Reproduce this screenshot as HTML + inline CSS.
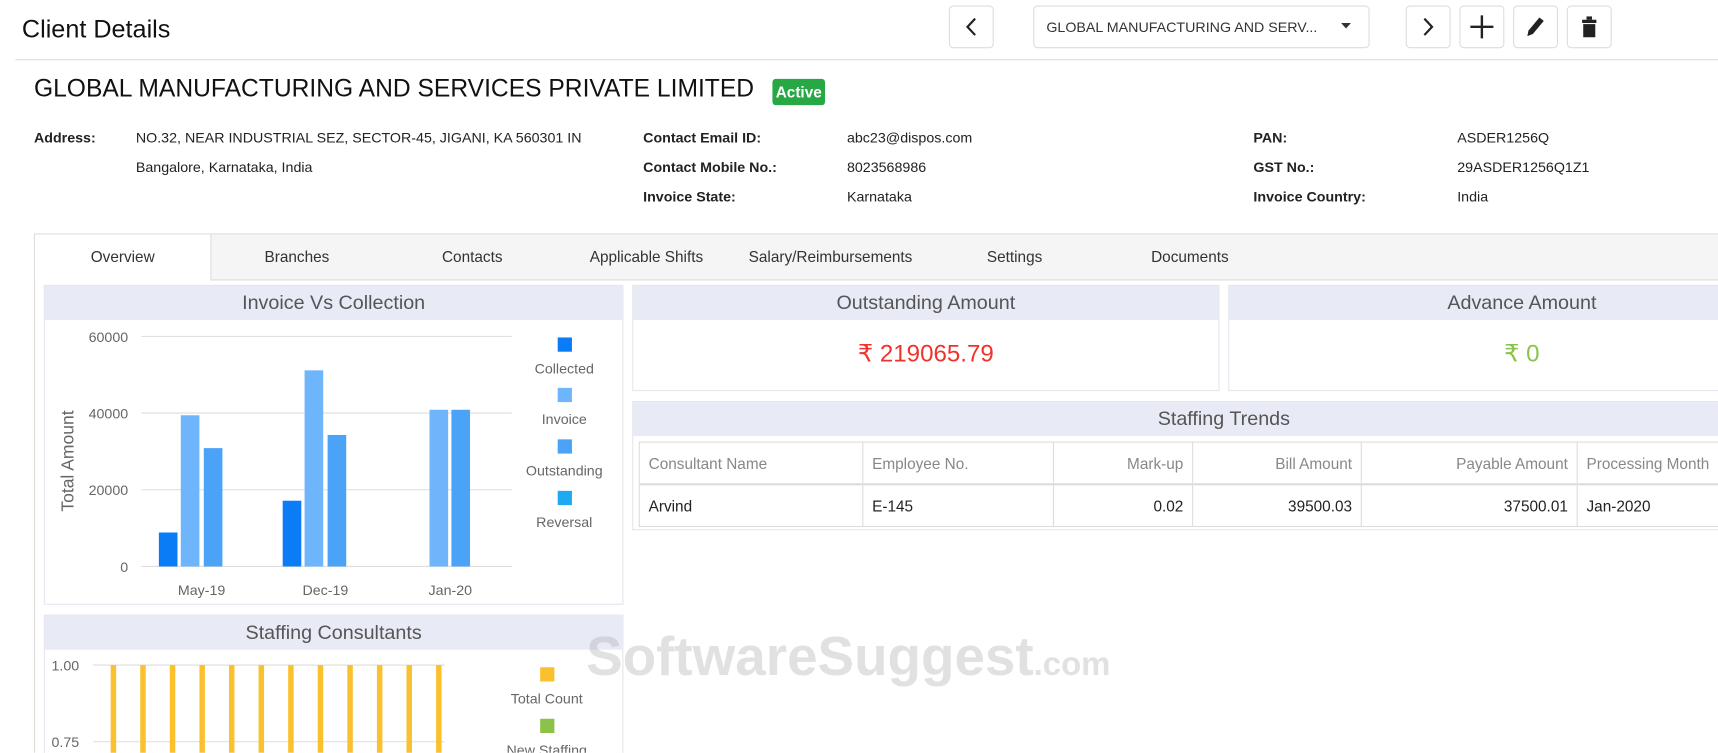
<!DOCTYPE html>
<html><head><meta charset="utf-8"><style>
html,body{margin:0;padding:0;background:#fff;overflow:hidden;width:1718px;height:753px}
#w{position:absolute;left:0;top:0;width:1568px;height:687px;overflow:hidden;transform:scale(1.09566);transform-origin:0 0;font-family:"Liberation Sans",sans-serif;color:#222}
.a{position:absolute;white-space:nowrap}
.btn{position:absolute;top:5px;height:39px;border:1px solid #ddd;border-radius:4px;background:#fff;box-sizing:border-box}
.lbl{font-weight:bold;font-size:13px;color:#222}
.val{font-size:13px;color:#222}
.panel{position:absolute;border:1px solid #e3e6ee;box-sizing:border-box;background:#fff}
.ph{position:absolute;left:0;right:0;top:0;height:31px;background:#e8eaf6;color:#555;font-size:18px;text-align:center;line-height:31px}
.tab{position:absolute;top:226px;font-size:14px;color:#333;transform:translateX(-50%)}
table{border-collapse:collapse;font-size:14px;table-layout:fixed;width:986px}
td{border:1px solid #ddd;padding:0 8px;height:37px;color:#888;overflow:hidden;white-space:nowrap}
</style></head><body><div id="w">
<div class="a" style="left:20px;top:13px;font-size:23px;color:#111">Client Details</div>
<div class="a" style="left:14px;top:54px;width:1554px;height:1px;background:#ddd"></div>
<div class="btn" style="left:866px;width:41px"><svg width="39" height="37"><path d="M23 11 L16 18.5 L23 26" stroke="#222" stroke-width="2" fill="none"/></svg></div>
<div class="btn" style="left:943px;width:307px"><span class="a" style="left:11px;top:11px;font-size:13px;color:#333">GLOBAL MANUFACTURING AND SERV...</span><svg class="a" style="left:280px;top:14px" width="10" height="8"><path d="M0 1h9l-4.5 5z" fill="#333"/></svg></div>
<div class="btn" style="left:1283px;width:41px"><svg width="39" height="37"><path d="M16 11 L23 18.5 L16 26" stroke="#222" stroke-width="2" fill="none"/></svg></div>
<div class="btn" style="left:1332px;width:41px"><svg width="39" height="37"><path d="M19.5 8v21M9 18.5h21" stroke="#222" stroke-width="2.2"/></svg></div>
<div class="btn" style="left:1381px;width:41px"><svg width="39" height="37"><path d="M12 27 L13 22 L23 10 L27 13 L17 25 Z" fill="#222"/></svg></div>
<div class="btn" style="left:1430px;width:41px"><svg width="39" height="37"><rect x="13" y="12" width="13" height="3" fill="#222"/><rect x="17" y="9" width="5" height="3" fill="#222"/><rect x="14" y="16" width="11" height="12" fill="#222"/></svg></div>

<div class="a" style="left:31px;top:67px;font-size:23px;color:#111;transform:scaleX(0.977);transform-origin:0 0">GLOBAL MANUFACTURING AND SERVICES PRIVATE LIMITED</div>
<div class="a" style="left:705px;top:72px;width:48px;height:24px;background:#28a745;border-radius:3px;color:#fff;font-size:14px;font-weight:bold;text-align:center;line-height:24px">Active</div>

<div class="a lbl" style="left:31px;top:118px">Address:</div>
<div class="a val" style="left:124px;top:118px">NO.32, NEAR INDUSTRIAL SEZ, SECTOR-45, JIGANI, KA 560301 IN</div>
<div class="a val" style="left:124px;top:145px">Bangalore, Karnataka, India</div>
<div class="a lbl" style="left:587px;top:118px">Contact Email ID:</div>
<div class="a val" style="left:773px;top:118px">abc23@dispos.com</div>
<div class="a lbl" style="left:587px;top:145px">Contact Mobile No.:</div>
<div class="a val" style="left:773px;top:145px">8023568986</div>
<div class="a lbl" style="left:587px;top:172px">Invoice State:</div>
<div class="a val" style="left:773px;top:172px">Karnataka</div>
<div class="a lbl" style="left:1144px;top:118px">PAN:</div>
<div class="a val" style="left:1330px;top:118px">ASDER1256Q</div>
<div class="a lbl" style="left:1144px;top:145px">GST No.:</div>
<div class="a val" style="left:1330px;top:145px">29ASDER1256Q1Z1</div>
<div class="a lbl" style="left:1144px;top:172px">Invoice Country:</div>
<div class="a val" style="left:1330px;top:172px">India</div>

<div class="a" style="left:31px;top:213px;width:1537px;height:500px;border:1px solid #ddd;border-right:none;box-sizing:border-box"></div>
<div class="a" style="left:32px;top:214px;width:1536px;height:41px;background:#f5f5f5;border-bottom:1px solid #ddd"></div>
<div class="a" style="left:32px;top:214px;width:160px;height:42px;background:#fff;border-right:1px solid #ddd"></div>
<div class="tab" style="left:112px">Overview</div>
<div class="tab" style="left:271px">Branches</div>
<div class="tab" style="left:431px">Contacts</div>
<div class="tab" style="left:590px">Applicable Shifts</div>
<div class="tab" style="left:758px">Salary/Reimbursements</div>
<div class="tab" style="left:926px">Settings</div>
<div class="tab" style="left:1086px">Documents</div>

<div class="panel" style="left:40px;top:260px;width:529px;height:292px"><div class="ph">Invoice Vs Collection</div>
<svg class="a" style="left:0;top:31px" width="527" height="260" font-family="Liberation Sans" font-size="13" fill="#666">
<g stroke="#ddd"><line x1="88" x2="426" y1="15" y2="15"/><line x1="88" x2="426" y1="85" y2="85"/><line x1="88" x2="426" y1="155" y2="155"/><line x1="88" x2="426" y1="225" y2="225"/></g>
<g text-anchor="end"><text x="76" y="20">60000</text><text x="76" y="90">40000</text><text x="76" y="160">20000</text><text x="76" y="230">0</text></g>
<text transform="translate(26 175) rotate(-90)" font-size="16" fill="#666">Total Amount</text>
<rect x="104" y="194" width="17" height="31" fill="#0a7cf5"/><rect x="124" y="87" width="17" height="138" fill="#6fb5fb"/><rect x="145" y="117" width="17" height="108" fill="#4aa3f6"/>
<rect x="217" y="165" width="17" height="60" fill="#0a7cf5"/><rect x="237" y="46" width="17" height="179" fill="#6fb5fb"/><rect x="258" y="105" width="17" height="120" fill="#4aa3f6"/>
<rect x="351" y="82" width="17" height="143" fill="#6fb5fb"/><rect x="371" y="82" width="17" height="143" fill="#4aa3f6"/>
<g text-anchor="middle"><text x="143" y="251">May-19</text><text x="256" y="251">Dec-19</text><text x="370" y="251">Jan-20</text>
<rect x="468" y="16" width="13" height="13" fill="#0a7cf5"/><text x="474" y="49">Collected</text>
<rect x="468" y="62" width="13" height="13" fill="#6fb5fb"/><text x="474" y="95">Invoice</text>
<rect x="468" y="109" width="13" height="13" fill="#4aa3f6"/><text x="474" y="142">Outstanding</text>
<rect x="468" y="156" width="13" height="13" fill="#1eaaf1"/><text x="474" y="189">Reversal</text></g>
</svg></div>

<div class="panel" style="left:577px;top:260px;width:536px;height:97px"><div class="ph">Outstanding Amount</div>
<div class="a" style="left:0;right:0;top:49px;text-align:center;font-size:22px;color:#f0322c">₹ 219065.79</div></div>
<div class="panel" style="left:1121px;top:260px;width:536px;height:97px"><div class="ph">Advance Amount</div>
<div class="a" style="left:0;right:0;top:49px;text-align:center;font-size:22px;color:#8bc34a">₹ 0</div></div>

<div class="panel" style="left:577px;top:366px;width:1080px;height:118px"><div class="ph">Staffing Trends</div>
<table class="a" style="left:5px;top:36px">
<colgroup><col style="width:204px"><col style="width:174px"><col style="width:127px"><col style="width:154px"><col style="width:197px"><col style="width:130px"></colgroup>
<tr><td>Consultant Name</td><td>Employee No.</td><td style="text-align:right">Mark-up</td><td style="text-align:right">Bill Amount</td><td style="text-align:right">Payable Amount</td><td>Processing Month</td></tr>
<tr><td style="color:#222;border-top:2px solid #ddd">Arvind</td><td style="color:#222;border-top:2px solid #ddd">E-145</td><td style="color:#222;text-align:right;border-top:2px solid #ddd">0.02</td><td style="color:#222;text-align:right;border-top:2px solid #ddd">39500.03</td><td style="color:#222;text-align:right;border-top:2px solid #ddd">37500.01</td><td style="color:#222;border-top:2px solid #ddd">Jan-2020</td></tr>
</table></div>

<div class="panel" style="left:40px;top:561px;width:529px;height:160px"><div class="ph">Staffing Consultants</div>
<svg class="a" style="left:0;top:31px" width="527" height="120" font-family="Liberation Sans" font-size="13" fill="#666">
<g stroke="#ddd"><line x1="44" x2="365" y1="14" y2="14"/><line x1="44" x2="365" y1="84" y2="84"/></g>
<text x="6" y="19">1.00</text><text x="6" y="89">0.75</text>
<g fill="#fbc02d"><rect x="60" y="14" width="5" height="110"/><rect x="87" y="14" width="5" height="110"/><rect x="114" y="14" width="5" height="110"/><rect x="141" y="14" width="5" height="110"/><rect x="168" y="14" width="5" height="110"/><rect x="195" y="14" width="5" height="110"/><rect x="222" y="14" width="5" height="110"/><rect x="249" y="14" width="5" height="110"/><rect x="276" y="14" width="5" height="110"/><rect x="303" y="14" width="5" height="110"/><rect x="330" y="14" width="5" height="110"/><rect x="357" y="14" width="5" height="110"/></g>
<g text-anchor="middle"><rect x="452" y="16" width="13" height="13" fill="#fbc02d"/><text x="458" y="49">Total Count</text>
<rect x="452" y="63" width="13" height="13" fill="#8bc34a"/><text x="458" y="96">New Staffing</text></g>
</svg></div>

<div class="a" style="left:535px;top:570px;font-size:50px;font-weight:bold;color:rgba(170,170,170,0.35);letter-spacing:0px">SoftwareSuggest<span style="font-size:30px">.com</span></div>
</div></body></html>
